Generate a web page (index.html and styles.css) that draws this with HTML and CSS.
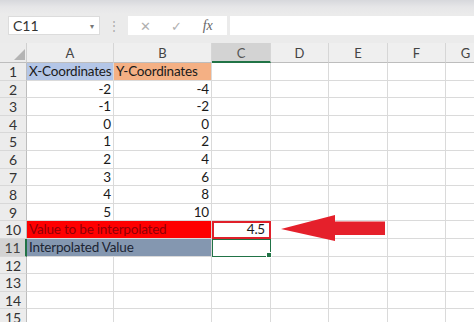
FILE: index.html
```html
<!DOCTYPE html>
<html lang="en">
<head>
    <meta charset="UTF-8">
    <title>Linear Interpolation</title>
    <link rel="stylesheet" href="styles.css">
</head>
<body>

<div class="formula-bar">
    <div class="name-box">
        <span>C11</span>
        <span class="drop">&#9662;</span>
    </div>
    <div class="grip">&#8942;</div>
    <div class="fx-buttons">
        <span class="fx-btn">&#x2715;</span>
        <span class="fx-btn">&#x2713;</span>
        <span class="fx-btn fx">fx</span>
    </div>
    <div class="formula-input"></div>
</div>

<div class="sheet">
    <div class="corner"><span class="tri"></span></div>
    <div class="col-head">A</div>
    <div class="col-head">B</div>
    <div class="col-head active">C</div>
    <div class="col-head">D</div>
    <div class="col-head">E</div>
    <div class="col-head">F</div>
    <div class="col-head">G</div>

    <div class="row-head">1</div>
    <div class="cell x-head">X-Coordinates</div>
    <div class="cell y-head">Y-Coordinates</div>
    <div class="cell"></div><div class="cell"></div><div class="cell"></div><div class="cell"></div><div class="cell"></div>

    <div class="row-head">2</div>
    <div class="cell num">-2</div><div class="cell num">-4</div>
    <div class="cell"></div><div class="cell"></div><div class="cell"></div><div class="cell"></div><div class="cell"></div>

    <div class="row-head">3</div>
    <div class="cell num">-1</div><div class="cell num">-2</div>
    <div class="cell"></div><div class="cell"></div><div class="cell"></div><div class="cell"></div><div class="cell"></div>

    <div class="row-head">4</div>
    <div class="cell num">0</div><div class="cell num">0</div>
    <div class="cell"></div><div class="cell"></div><div class="cell"></div><div class="cell"></div><div class="cell"></div>

    <div class="row-head">5</div>
    <div class="cell num">1</div><div class="cell num">2</div>
    <div class="cell"></div><div class="cell"></div><div class="cell"></div><div class="cell"></div><div class="cell"></div>

    <div class="row-head">6</div>
    <div class="cell num">2</div><div class="cell num">4</div>
    <div class="cell"></div><div class="cell"></div><div class="cell"></div><div class="cell"></div><div class="cell"></div>

    <div class="row-head">7</div>
    <div class="cell num">3</div><div class="cell num">6</div>
    <div class="cell"></div><div class="cell"></div><div class="cell"></div><div class="cell"></div><div class="cell"></div>

    <div class="row-head">8</div>
    <div class="cell num">4</div><div class="cell num">8</div>
    <div class="cell"></div><div class="cell"></div><div class="cell"></div><div class="cell"></div><div class="cell"></div>

    <div class="row-head">9</div>
    <div class="cell num">5</div><div class="cell num">10</div>
    <div class="cell"></div><div class="cell"></div><div class="cell"></div><div class="cell"></div><div class="cell"></div>

    <div class="row-head">10</div>
    <div class="cell span2 to-interp">Value to be interpolated</div>
    <div class="cell num input-cell">4.5</div>
    <div class="cell"></div><div class="cell"></div><div class="cell"></div><div class="cell"></div>

    <div class="row-head active">11</div>
    <div class="cell span2 interp">Interpolated Value</div>
    <div class="cell selected"><span class="handle"></span></div>
    <div class="cell"></div><div class="cell"></div><div class="cell"></div><div class="cell"></div>

    <div class="row-head">12</div>
    <div class="cell"></div><div class="cell"></div><div class="cell"></div><div class="cell"></div><div class="cell"></div><div class="cell"></div><div class="cell"></div>

    <div class="row-head">13</div>
    <div class="cell"></div><div class="cell"></div><div class="cell"></div><div class="cell"></div><div class="cell"></div><div class="cell"></div><div class="cell"></div>

    <div class="row-head">14</div>
    <div class="cell"></div><div class="cell"></div><div class="cell"></div><div class="cell"></div><div class="cell"></div><div class="cell"></div><div class="cell"></div>

    <div class="row-head">15</div>
    <div class="cell"></div><div class="cell"></div><div class="cell"></div><div class="cell"></div><div class="cell"></div><div class="cell"></div><div class="cell"></div>

    <svg class="arrow" width="110" height="30" viewBox="0 0 110 30">
        <polygon points="0,14 54,0 54,6.5 104,6.5 104,20 54,20 54,26" fill="#e5202b"/>
    </svg>
</div>

</body>
</html>
```

FILE: styles.css
```css
html, body {
    margin: 0;
    padding: 0;
}

body {
    width: 474px;
    height: 322px;
    overflow: hidden;
    font-family: Lato, "Liberation Sans", sans-serif;
    color: #1a1a1a;
    background: #eaeaea;
}

.formula-bar {
    height: 43px;
    box-sizing: border-box;
    padding: 16px 0 0 8px;
    display: flex;
    align-items: flex-start;
    background: linear-gradient(#d7d8dc 0, #e6e6e8 7px, #ebebeb 14px);
}

.name-box {
    width: 92px;
    height: 19px;
    box-sizing: border-box;
    background: #fff;
    border: 1px solid #dcdcdc;
    display: flex;
    align-items: center;
    justify-content: space-between;
    padding: 0 5px 0 4px;
    font-size: 14px;
    color: #333;
}

.drop {
    font-size: 8px;
    color: #777;
}

.grip {
    width: 28px;
    text-align: center;
    color: #aaa;
    font-size: 12px;
    line-height: 19px;
}

.fx-buttons {
    width: 99px;
    height: 19px;
    background: #fff;
    display: flex;
    align-items: center;
    justify-content: space-around;
    padding: 0 4px 0 2px;
    box-sizing: border-box;
}

.fx-btn {
    color: #b0b0b0;
    font-size: 13px;
}

.fx {
    font-family: "Liberation Serif", serif;
    font-style: italic;
    color: #666;
    font-size: 14px;
}

.formula-input {
    flex: 1;
    height: 19px;
    margin-left: 3px;
    background: #fff;
}

.sheet {
    position: relative;
    display: grid;
    grid-template-columns: 27px 87px 98px 59px 58px 59px 58px 40px;
    grid-template-rows: 20px repeat(15, 17.6px);
    background: #fff;
    font-size: 13.5px;
    letter-spacing: -0.2px;
}

.corner {
    position: relative;
    background: #ececec;
    border-right: 1px solid #d0d0d0;
    border-bottom: 1px solid #bdbdbd;
}

.tri {
    position: absolute;
    right: 1px;
    bottom: 2px;
    border-left: 11px solid transparent;
    border-bottom: 11px solid #b4b4b4;
}

.col-head {
    background: #efefef;
    border-right: 1px solid #d6d6d6;
    border-bottom: 1px solid #bdbdbd;
    text-align: center;
    line-height: 20px;
    color: #444;
    font-size: 13px;
    letter-spacing: 0;
}

.col-head.active {
    background: #d3d3d3;
    border-bottom: 2px solid #217346;
    color: #555;
}

.row-head {
    background: #ececec;
    border-right: 1px solid #bdbdbd;
    border-bottom: 1px solid #d8d8d8;
    text-align: center;
    line-height: 17px;
    font-size: 14px;
    letter-spacing: 0;
    color: #333;
}

.row-head.active {
    background: #d3d3d3;
    border-right: 2px solid #217346;
    color: #444;
}

.cell {
    border-right: 1px solid #dadada;
    border-bottom: 1px solid #dadada;
    padding: 0 2px 0 2px;
    line-height: 17px;
    white-space: nowrap;
    overflow: hidden;
}

.num {
    text-align: right;
}

.span2 {
    grid-column: span 2;
}

.x-head {
    background: #b4c6e7;
}

.y-head {
    background: #f4b084;
}

.to-interp {
    background: #ff0000;
    color: #8f0006;
}

.interp {
    background: #8497b0;
    color: #1c2533;
}

.input-cell {
    outline: 2px solid #e0202a;
    outline-offset: -2px;
    padding-right: 5px;
}

.selected {
    position: relative;
    outline: 1px solid #217346;
    outline-offset: -1px;
    overflow: visible;
}

.handle {
    position: absolute;
    right: -2px;
    bottom: -2px;
    width: 4px;
    height: 4px;
    background: #217346;
    border: 1px solid #fff;
}

.arrow {
    position: absolute;
    left: 281px;
    top: 172px;
}
```
